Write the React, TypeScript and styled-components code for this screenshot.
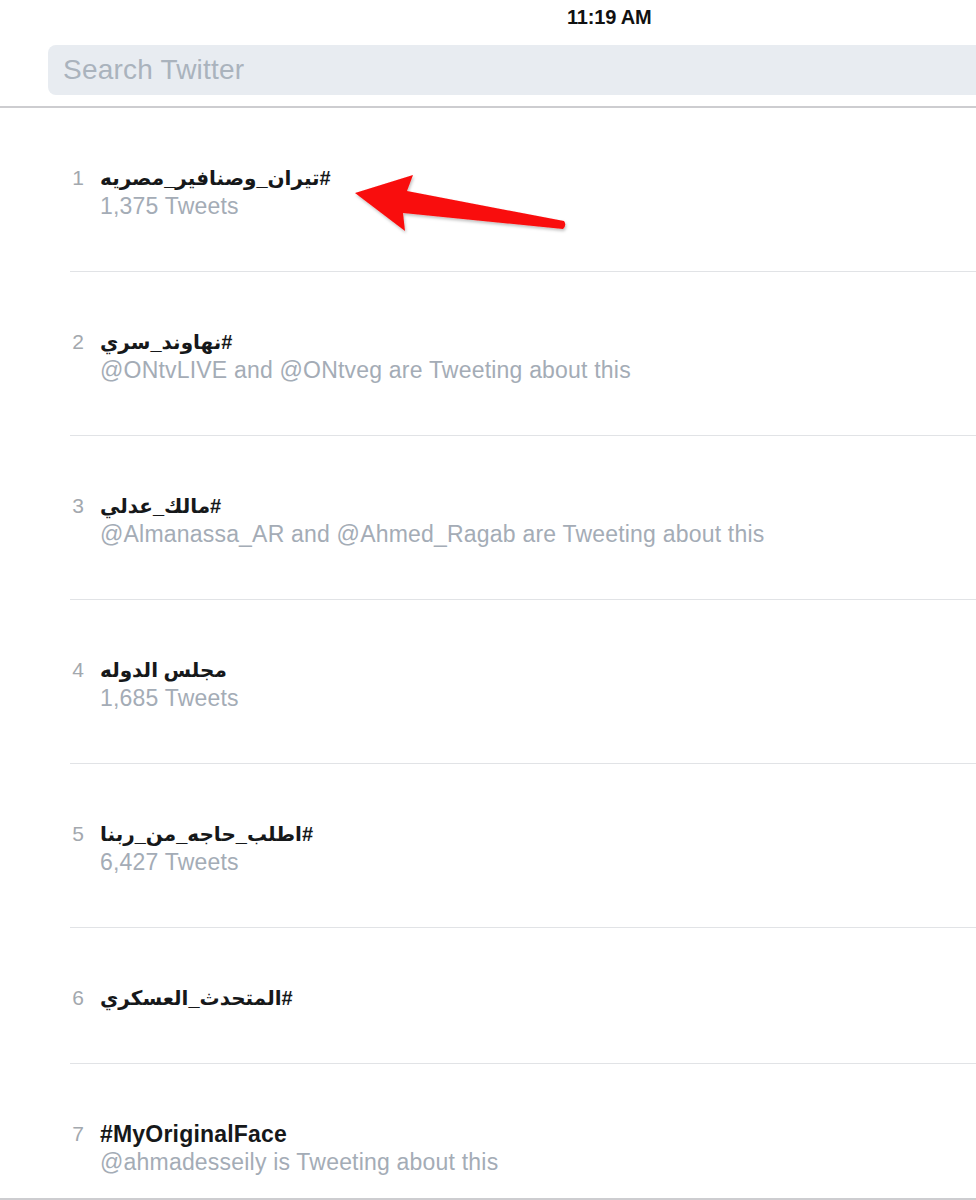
import React from "react";
import styled, { createGlobalStyle } from "styled-components";

const Global = createGlobalStyle`
  html, body { margin: 0; padding: 0; background: #ffffff; }
  body { font-family: "Liberation Sans", "DejaVu Sans", Arial, sans-serif; }
  * { box-sizing: border-box; }
`;

const Screen = styled.div`
  position: relative;
  width: 976px;
  height: 1200px;
  display: flex;
  flex-direction: column;
  overflow: hidden;
  background: #fff;
`;

const StatusBar = styled.div`
  height: 45px;
  display: flex;
  align-items: flex-start;
  padding: 5px 0 0 567px;
`;

const Time = styled.span`
  font-family: "Liberation Sans", Arial, sans-serif;
  font-weight: 700;
  font-size: 20px;
  line-height: 24px;
  color: #111;
  letter-spacing: -0.2px;
`;

const SearchHeader = styled.div`
  display: flex;
  padding: 0 0 11px 48px;
  border-bottom: 2px solid #cdcdd0;
  overflow: hidden;
`;

const SearchBox = styled.div`
  flex: 1;
  height: 50px;
  margin-right: -12px;
  background: #e8ecf1;
  border-radius: 8px;
  display: flex;
  align-items: center;
  padding-left: 15px;
`;

const Placeholder = styled.span`
  font-size: 28px;
  color: #aab3bd;
  letter-spacing: 0.2px;
`;

const List = styled.div`
  flex: 1;
  display: flex;
  flex-direction: column;
  overflow: hidden;
`;

const Row = styled.div`
  display: flex;
  margin-left: 70px;
  padding: 56px 0 51px;
  border-bottom: 1px solid #e1e3e6;
`;

const Rank = styled.div`
  width: 14px;
  margin-right: 16px;
  text-align: right;
  font-size: 21px;
  line-height: 28px;
  color: #a3a8ae;
`;

const Body = styled.div`
  display: flex;
  flex-direction: column;
`;

const Title = styled.div<{ $rtl?: boolean }>`
  font-family: "Liberation Sans", "DejaVu Sans", sans-serif;
  font-weight: 700;
  font-size: ${(p) => (p.$rtl ? "20px" : "23px")};
  line-height: 28px;
  color: #16181a;
  unicode-bidi: plaintext;
  text-align: left;
  letter-spacing: ${(p) => (p.$rtl ? "0" : "0.2px")};
`;

const Sub = styled.div`
  font-size: 23px;
  line-height: 28px;
  color: #a4acb6;
  letter-spacing: 0.2px;
`;

const TabBar = styled.div`
  height: 2px;
  border-top: 2px solid #cdcdd0;
`;

const ArrowSvg = styled.svg`
  position: absolute;
  left: 340px;
  top: 160px;
  width: 240px;
  height: 80px;
  overflow: visible;
`;

const trends = [
  { n: 1, t: "#تيران_وصنافير_مصريه", s: "1,375 Tweets", rtl: true },
  { n: 2, t: "#نهاوند_سري", s: "@ONtvLIVE and @ONtveg are Tweeting about this", rtl: true },
  { n: 3, t: "#مالك_عدلي", s: "@Almanassa_AR and @Ahmed_Ragab are Tweeting about this", rtl: true },
  { n: 4, t: "مجلس الدوله", s: "1,685 Tweets", rtl: true },
  { n: 5, t: "#اطلب_حاجه_من_ربنا", s: "6,427 Tweets", rtl: true },
  { n: 6, t: "#المتحدث_العسكري", s: "", rtl: true },
  { n: 7, t: "#MyOriginalFace", s: "@ahmadesseily is Tweeting about this", rtl: false },
];

export default function App() {
  return (
    <>
      <Global />
      <Screen>
        <StatusBar>
          <Time>11:19 AM</Time>
        </StatusBar>
        <SearchHeader>
          <SearchBox>
            <Placeholder>Search Twitter</Placeholder>
          </SearchBox>
        </SearchHeader>
        <List>
          {trends.map((r) => (
            <Row key={r.n}>
              <Rank>{r.n}</Rank>
              <Body>
                <Title $rtl={r.rtl}>{r.t}</Title>
                {r.s && <Sub>{r.s}</Sub>}
              </Body>
            </Row>
          ))}
        </List>
        <TabBar />
        <ArrowSvg viewBox="340 160 240 80">
          <defs>
            <filter id="sh" x="-10%" y="-30%" width="130%" height="160%">
              <feDropShadow dx="1" dy="2" stdDeviation="1.5" floodColor="#000" floodOpacity="0.25" />
            </filter>
          </defs>
          <path
            d="M355 193 L413 175 L407 191 L564 221 Q567 225 563 229 L403 213 L405 231 Z"
            fill="#f90d0d"
            filter="url(#sh)"
          />
        </ArrowSvg>
      </Screen>
    </>
  );
}
